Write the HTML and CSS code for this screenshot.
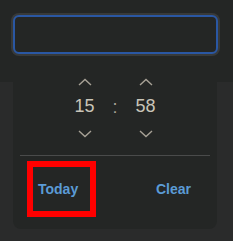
FILE: index.html
```html
<!DOCTYPE html>
<html>
<head>
<meta charset="utf-8">
<link rel="stylesheet" href="styles.css">
</head>
<body>
  <div class="field">
    <input class="input" type="text" aria-label="Time">
  </div>
  <div class="panel">
    <div class="picker">
      <div class="col">
        <button class="arrow" aria-label="Increase hours">
          <svg width="14" height="8" viewBox="0 0 14 8"><path d="M1 7 L7 1.5 L13 7" fill="none" stroke="currentColor" stroke-width="1.4"/></svg>
        </button>
        <div class="num">15</div>
        <button class="arrow" aria-label="Decrease hours">
          <svg width="14" height="8" viewBox="0 0 14 8"><path d="M1 1 L7 6.5 L13 1" fill="none" stroke="currentColor" stroke-width="1.4"/></svg>
        </button>
      </div>
      <div class="sep">:</div>
      <div class="col">
        <button class="arrow" aria-label="Increase minutes">
          <svg width="14" height="8" viewBox="0 0 14 8"><path d="M1 7 L7 1.5 L13 7" fill="none" stroke="currentColor" stroke-width="1.4"/></svg>
        </button>
        <div class="num">58</div>
        <button class="arrow" aria-label="Decrease minutes">
          <svg width="14" height="8" viewBox="0 0 14 8"><path d="M1 1 L7 6.5 L13 1" fill="none" stroke="currentColor" stroke-width="1.4"/></svg>
        </button>
      </div>
    </div>
    <div class="divider"></div>
    <div class="footer">
      <button class="btn today">Today</button>
      <button class="btn">Clear</button>
    </div>
  </div>
</body>
</html>
```
FILE: styles.css
```css
html, body {
  margin: 0;
  padding: 0;
}
body {
  width: 233px;
  height: 241px;
  overflow: hidden;
  background: linear-gradient(#242625 0, #242625 82px, #2a2b2b 82px);
  font-family: "Liberation Sans", Arial, sans-serif;
}
.field {
  padding: 15px 0 0 13px;
}
.input {
  display: block;
  box-sizing: border-box;
  width: 205px;
  height: 39px;
  margin: 0;
  background: #242625;
  border: 2px solid #2a57a3;
  border-radius: 6px;
  box-shadow: 0 0 0 2px #383a3a;
  outline: none;
}
.panel {
  box-sizing: border-box;
  width: 204px;
  margin: 6px 0 0 13px;
  padding: 14px 7px 18px;
  background: #242625;
  border-radius: 0 0 8px 8px;
}
.picker {
  display: flex;
  justify-content: center;
}
.col {
  width: 40px;
  display: flex;
  flex-direction: column;
  align-items: center;
}
.arrow {
  display: flex;
  align-items: center;
  justify-content: center;
  width: 40px;
  height: 16px;
  padding: 0;
  border: 0;
  background: none;
  color: #a7a196;
}
.num {
  margin-top: 2px;
  height: 28px;
  line-height: 28px;
  font-size: 18px;
  color: #c9c4b8;
  margin-bottom: 6px;
}
.sep {
  width: 21px;
  text-align: center;
  font-size: 18px;
  line-height: 28px;
  margin-top: 19px;
  color: #a7a196;
}
.divider {
  height: 1px;
  margin-top: 13px;
  background: #4a4b4b;
}
.footer {
  display: flex;
  justify-content: space-between;
  padding: 11px 13px 0 12px;
}
.btn {
  position: relative;
  height: 44px;
  padding: 0 6px;
  border: 0;
  background: none;
  font-family: "Liberation Sans", Arial, sans-serif;
  font-weight: bold;
  font-size: 14px;
  color: #5b9bd6;
}
.today::after {
  content: "";
  position: absolute;
  top: -6px;
  bottom: -6px;
  left: -5px;
  right: -12px;
  border: 6px solid #ff0000;
}
```
